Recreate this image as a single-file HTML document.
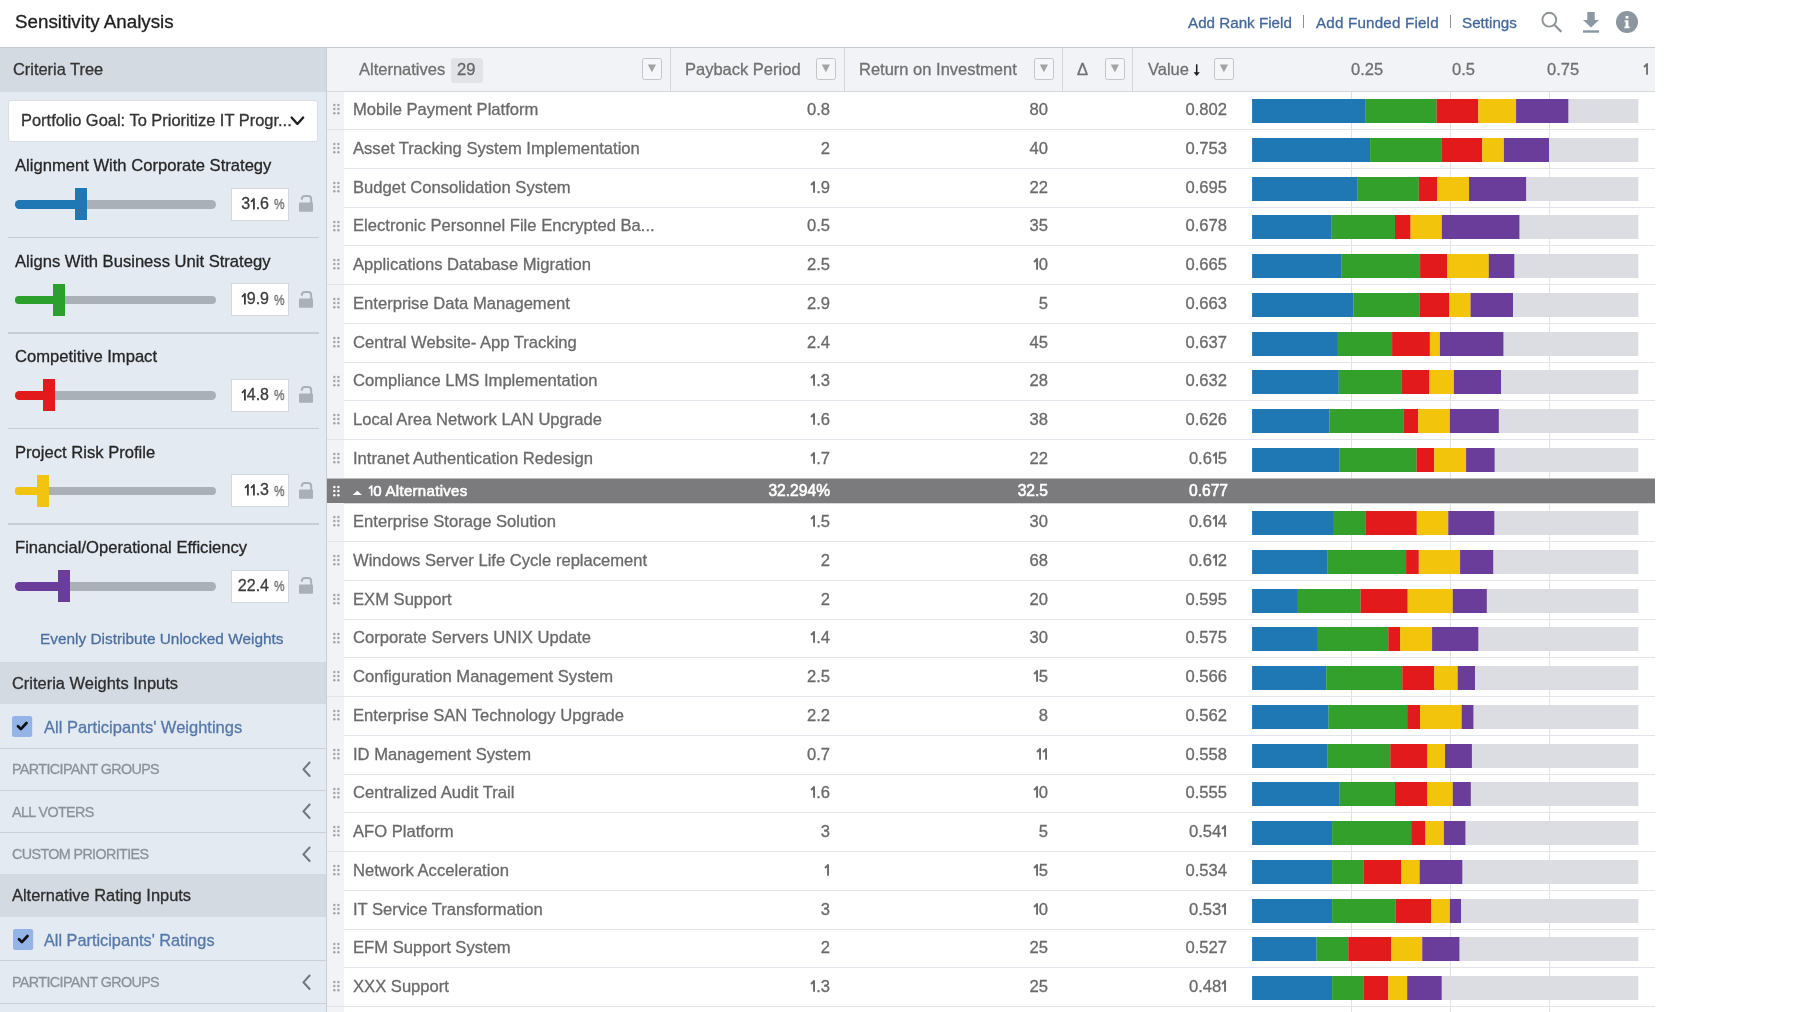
<!DOCTYPE html>
<html><head><meta charset="utf-8"><title>Sensitivity Analysis</title>
<style>
html,body{margin:0;padding:0;width:1800px;height:1012px;overflow:hidden;background:#fff}
body{position:relative;font-family:"Liberation Sans",sans-serif}
.t{position:absolute;white-space:nowrap;will-change:transform;-webkit-text-stroke:0.3px currentColor}
.r{position:absolute;display:block}
.one{display:inline-block;width:0.35em;height:0.711em;vertical-align:baseline;overflow:visible}
</style></head><body>
<div class="r" style="left:0.00px;top:0.00px;width:1800.00px;height:1012.00px;background:#ffffff;"></div>
<div class="t" style="left:15.00px;top:9.89px;font-size:18.8px;line-height:24px;color:#1e1e1e;">Sensitivity Analysis</div>
<div class="t" style="left:1187.90px;top:10.63px;font-size:15.2px;line-height:24px;color:#44679a;">Add Rank Field</div>
<div class="r" style="left:1303.00px;top:14.60px;width:1.40px;height:13.30px;background:#8f8f8f;"></div>
<div class="t" style="left:1316.10px;top:10.63px;font-size:15.2px;line-height:24px;color:#44679a;letter-spacing:0.18px;">Add Funded Field</div>
<div class="r" style="left:1450.00px;top:14.60px;width:1.40px;height:13.30px;background:#8f8f8f;"></div>
<div class="t" style="left:1462.40px;top:10.63px;font-size:15.2px;line-height:24px;color:#44679a;">Settings</div>
<svg class="r" style="left:1530px;top:0px" width="120" height="46" viewBox="0 0 120 46">
<circle cx="19.3" cy="19.7" r="6.9" fill="none" stroke="#8e9399" stroke-width="1.9"/>
<line x1="24.3" y1="24.8" x2="30.8" y2="31.3" stroke="#8e9399" stroke-width="2.2" stroke-linecap="round"/>
<path d="M57.3 12 H64.7 V20 H69 L61 27.6 L53 20 H57.3 Z" fill="#8b97a3"/>
<rect x="53" y="30.3" width="16" height="2.4" fill="#8b97a3"/>
<circle cx="97" cy="22" r="11" fill="#8b96a0"/>
<rect x="95.6" y="16" width="2.8" height="2.6" fill="#fff"/>
<path d="M94.6 20.2 H98.4 V26.6 H99.6 V28.2 H94.4 V26.6 H95.6 V21.8 H94.6 Z" fill="#fff"/>
</svg>
<div class="r" style="left:0.00px;top:47.00px;width:1655.00px;height:1.00px;background:#c6cbd2;"></div>
<div class="r" style="left:0.00px;top:48.00px;width:326.00px;height:964.00px;background:#e4eaf2;"></div>
<div class="r" style="left:325.60px;top:48.00px;width:1.40px;height:964.00px;background:#c9ced5;"></div>
<div class="r" style="left:0.00px;top:48.00px;width:325.60px;height:44.00px;background:#d3dae2;"></div>
<div class="t" style="left:12.50px;top:57.32px;font-size:16.4px;line-height:24px;color:#333;">Criteria Tree</div>
<div class="r" style="left:8px;top:99.5px;width:309.5px;height:42.5px;background:#fff;border:1px solid #d9dee5;box-sizing:border-box;border-radius:3px"></div>
<div class="t" style="left:21.25px;top:108.05px;font-size:16.45px;line-height:24px;color:#333;">Portfolio Goal: To Prioritize IT Progr...</div>
<svg class="r" style="left:288px;top:113px" width="20" height="16" viewBox="0 0 20 16"><path d="M3.6 4.5 L9.4 11.0 L15.2 4.5" fill="none" stroke="#1e1e1e" stroke-width="2.3" stroke-linecap="round" stroke-linejoin="round"/></svg>
<div class="t" style="left:15.00px;top:154.25px;font-size:16.6px;line-height:24px;color:#262626;">Alignment With Corporate Strategy</div>
<div class="r" style="left:14.5px;top:200.00px;width:201px;height:8.8px;background:#a9b0b8;border-radius:4.4px"></div>
<div class="r" style="left:14.5px;top:200.00px;width:64.52px;height:8.8px;background:#1f77b4;border-radius:4.4px 0 0 4.4px"></div>
<div class="r" style="left:75.02px;top:188.25px;width:12.00px;height:31.75px;background:#1f77b4;"></div>
<div class="r" style="left:230.5px;top:187.50px;width:58px;height:33px;background:#fff;border:1px solid #d3d8de;box-sizing:border-box"></div>
<div class="t" style="left:229.30px;width:40px;text-align:right;top:191.96px;font-size:16.0px;line-height:24px;color:#3c3c3c;">3<svg class="one" viewBox="0 0 5.8 11.8"><path d="M4.05 0.3V11.8M4.5 0.7L1.0 4.0" stroke="currentColor" stroke-width="1.9" fill="none"/></svg>.6</div>
<div class="t" style="left:273.60px;top:192.28px;font-size:14.2px;line-height:24px;color:#6a6a6a;transform:scaleX(0.84);transform-origin:0 50%;">%</div>
<svg class="r" style="left:296px;top:190.00px" width="22" height="26" viewBox="0 0 22 26">
<rect x="3" y="12.5" width="14" height="9.3" rx="1" fill="#a9b0b8"/>
<path d="M5.8 9.8 V9.2 Q5.8 5.9 9 5.9 H12 Q15.2 5.9 15.2 9.2 V13" fill="none" stroke="#a9b0b8" stroke-width="2"/>
</svg>
<div class="r" style="left:8.00px;top:236.50px;width:310.75px;height:1.50px;background:#c8cdd4;"></div>
<div class="t" style="left:15.00px;top:249.75px;font-size:16.6px;line-height:24px;color:#262626;">Aligns With Business Unit Strategy</div>
<div class="r" style="left:14.5px;top:295.50px;width:201px;height:8.8px;background:#a9b0b8;border-radius:4.4px"></div>
<div class="r" style="left:14.5px;top:295.50px;width:42.41px;height:8.8px;background:#2ca02c;border-radius:4.4px 0 0 4.4px"></div>
<div class="r" style="left:52.91px;top:283.75px;width:12.00px;height:31.75px;background:#2ca02c;"></div>
<div class="r" style="left:230.5px;top:283.00px;width:58px;height:33px;background:#fff;border:1px solid #d3d8de;box-sizing:border-box"></div>
<div class="t" style="left:229.30px;width:40px;text-align:right;top:287.46px;font-size:16.0px;line-height:24px;color:#3c3c3c;"><svg class="one" viewBox="0 0 5.8 11.8"><path d="M4.05 0.3V11.8M4.5 0.7L1.0 4.0" stroke="currentColor" stroke-width="1.9" fill="none"/></svg>9.9</div>
<div class="t" style="left:273.60px;top:287.78px;font-size:14.2px;line-height:24px;color:#6a6a6a;transform:scaleX(0.84);transform-origin:0 50%;">%</div>
<svg class="r" style="left:296px;top:285.50px" width="22" height="26" viewBox="0 0 22 26">
<rect x="3" y="12.5" width="14" height="9.3" rx="1" fill="#a9b0b8"/>
<path d="M5.8 9.8 V9.2 Q5.8 5.9 9 5.9 H12 Q15.2 5.9 15.2 9.2 V13" fill="none" stroke="#a9b0b8" stroke-width="2"/>
</svg>
<div class="r" style="left:8.00px;top:332.00px;width:310.75px;height:1.50px;background:#c8cdd4;"></div>
<div class="t" style="left:15.00px;top:345.25px;font-size:16.6px;line-height:24px;color:#262626;">Competitive Impact</div>
<div class="r" style="left:14.5px;top:391.00px;width:201px;height:8.8px;background:#a9b0b8;border-radius:4.4px"></div>
<div class="r" style="left:14.5px;top:391.00px;width:32.77px;height:8.8px;background:#e31a1c;border-radius:4.4px 0 0 4.4px"></div>
<div class="r" style="left:43.27px;top:379.25px;width:12.00px;height:31.75px;background:#e31a1c;"></div>
<div class="r" style="left:230.5px;top:378.50px;width:58px;height:33px;background:#fff;border:1px solid #d3d8de;box-sizing:border-box"></div>
<div class="t" style="left:229.30px;width:40px;text-align:right;top:382.96px;font-size:16.0px;line-height:24px;color:#3c3c3c;"><svg class="one" viewBox="0 0 5.8 11.8"><path d="M4.05 0.3V11.8M4.5 0.7L1.0 4.0" stroke="currentColor" stroke-width="1.9" fill="none"/></svg>4.8</div>
<div class="t" style="left:273.60px;top:383.28px;font-size:14.2px;line-height:24px;color:#6a6a6a;transform:scaleX(0.84);transform-origin:0 50%;">%</div>
<svg class="r" style="left:296px;top:381.00px" width="22" height="26" viewBox="0 0 22 26">
<rect x="3" y="12.5" width="14" height="9.3" rx="1" fill="#a9b0b8"/>
<path d="M5.8 9.8 V9.2 Q5.8 5.9 9 5.9 H12 Q15.2 5.9 15.2 9.2 V13" fill="none" stroke="#a9b0b8" stroke-width="2"/>
</svg>
<div class="r" style="left:8.00px;top:427.50px;width:310.75px;height:1.50px;background:#c8cdd4;"></div>
<div class="t" style="left:15.00px;top:440.75px;font-size:16.6px;line-height:24px;color:#262626;">Project Risk Profile</div>
<div class="r" style="left:14.5px;top:486.50px;width:201px;height:8.8px;background:#a9b0b8;border-radius:4.4px"></div>
<div class="r" style="left:14.5px;top:486.50px;width:26.16px;height:8.8px;background:#f2c40f;border-radius:4.4px 0 0 4.4px"></div>
<div class="r" style="left:36.66px;top:474.75px;width:12.00px;height:31.75px;background:#f2c40f;"></div>
<div class="r" style="left:230.5px;top:474.00px;width:58px;height:33px;background:#fff;border:1px solid #d3d8de;box-sizing:border-box"></div>
<div class="t" style="left:229.30px;width:40px;text-align:right;top:478.46px;font-size:16.0px;line-height:24px;color:#3c3c3c;"><svg class="one" viewBox="0 0 5.8 11.8"><path d="M4.05 0.3V11.8M4.5 0.7L1.0 4.0" stroke="currentColor" stroke-width="1.9" fill="none"/></svg><svg class="one" viewBox="0 0 5.8 11.8"><path d="M4.05 0.3V11.8M4.5 0.7L1.0 4.0" stroke="currentColor" stroke-width="1.9" fill="none"/></svg>.3</div>
<div class="t" style="left:273.60px;top:478.78px;font-size:14.2px;line-height:24px;color:#6a6a6a;transform:scaleX(0.84);transform-origin:0 50%;">%</div>
<svg class="r" style="left:296px;top:476.50px" width="22" height="26" viewBox="0 0 22 26">
<rect x="3" y="12.5" width="14" height="9.3" rx="1" fill="#a9b0b8"/>
<path d="M5.8 9.8 V9.2 Q5.8 5.9 9 5.9 H12 Q15.2 5.9 15.2 9.2 V13" fill="none" stroke="#a9b0b8" stroke-width="2"/>
</svg>
<div class="r" style="left:8.00px;top:523.00px;width:310.75px;height:1.50px;background:#c8cdd4;"></div>
<div class="t" style="left:15.00px;top:536.25px;font-size:16.6px;line-height:24px;color:#262626;">Financial/Operational Efficiency</div>
<div class="r" style="left:14.5px;top:582.00px;width:201px;height:8.8px;background:#a9b0b8;border-radius:4.4px"></div>
<div class="r" style="left:14.5px;top:582.00px;width:47.14px;height:8.8px;background:#6a3d9a;border-radius:4.4px 0 0 4.4px"></div>
<div class="r" style="left:57.64px;top:570.25px;width:12.00px;height:31.75px;background:#6a3d9a;"></div>
<div class="r" style="left:230.5px;top:569.50px;width:58px;height:33px;background:#fff;border:1px solid #d3d8de;box-sizing:border-box"></div>
<div class="t" style="left:229.30px;width:40px;text-align:right;top:573.96px;font-size:16.0px;line-height:24px;color:#3c3c3c;">22.4</div>
<div class="t" style="left:273.60px;top:574.28px;font-size:14.2px;line-height:24px;color:#6a6a6a;transform:scaleX(0.84);transform-origin:0 50%;">%</div>
<svg class="r" style="left:296px;top:572.00px" width="22" height="26" viewBox="0 0 22 26">
<rect x="3" y="12.5" width="14" height="9.3" rx="1" fill="#a9b0b8"/>
<path d="M5.8 9.8 V9.2 Q5.8 5.9 9 5.9 H12 Q15.2 5.9 15.2 9.2 V13" fill="none" stroke="#a9b0b8" stroke-width="2"/>
</svg>
<div class="t" style="left:39.80px;top:627.46px;font-size:15.4px;line-height:24px;color:#4d6f9f;">Evenly Distribute Unlocked Weights</div>
<div class="r" style="left:0.00px;top:661.60px;width:325.60px;height:42.80px;background:#d3dae2;"></div>
<div class="t" style="left:12.40px;top:670.60px;font-size:16.45px;line-height:24px;color:#2e2e2e;">Criteria Weights Inputs</div>
<svg class="r" style="left:12.10px;top:715.90px" width="21" height="21" viewBox="0 0 21 21">
<rect x="0" y="0" width="20.2" height="20.9" rx="2.2" fill="#94b3e6"/>
<path d="M6.0 10.2 L8.9 13.1 L14.5 7.0" fill="none" stroke="#111" stroke-width="2.7" stroke-linecap="round" stroke-linejoin="round"/>
</svg>
<div class="t" style="left:43.90px;top:714.58px;font-size:16.5px;line-height:24px;color:#5678a8;">All Participants' Weightings</div>
<div class="r" style="left:0.00px;top:747.50px;width:325.60px;height:1.00px;background:#cbd0d7;"></div>
<div class="t" style="left:12.30px;top:757.25px;font-size:14.3px;line-height:24px;color:#8b9299;letter-spacing:-0.6px;">PARTICIPANT GROUPS</div>
<svg class="r" style="left:298px;top:758.60px" width="16" height="20" viewBox="0 0 16 20">
<path d="M11.6 3.5 L5.4 10.3 L11.6 17" fill="none" stroke="#6f7780" stroke-width="2" stroke-linecap="round" stroke-linejoin="round"/>
</svg>
<div class="r" style="left:0.00px;top:789.50px;width:325.60px;height:1.00px;background:#cbd0d7;"></div>
<div class="t" style="left:12.30px;top:799.65px;font-size:14.3px;line-height:24px;color:#8b9299;letter-spacing:-0.6px;">ALL VOTERS</div>
<svg class="r" style="left:298px;top:801.00px" width="16" height="20" viewBox="0 0 16 20">
<path d="M11.6 3.5 L5.4 10.3 L11.6 17" fill="none" stroke="#6f7780" stroke-width="2" stroke-linecap="round" stroke-linejoin="round"/>
</svg>
<div class="r" style="left:0.00px;top:832.10px;width:325.60px;height:1.00px;background:#cbd0d7;"></div>
<div class="t" style="left:12.30px;top:842.25px;font-size:14.3px;line-height:24px;color:#8b9299;letter-spacing:-0.6px;">CUSTOM PRIORITIES</div>
<svg class="r" style="left:298px;top:843.60px" width="16" height="20" viewBox="0 0 16 20">
<path d="M11.6 3.5 L5.4 10.3 L11.6 17" fill="none" stroke="#6f7780" stroke-width="2" stroke-linecap="round" stroke-linejoin="round"/>
</svg>
<div class="r" style="left:0.00px;top:874.40px;width:325.60px;height:42.30px;background:#d3dae2;"></div>
<div class="t" style="left:12.40px;top:883.10px;font-size:16.45px;line-height:24px;color:#2e2e2e;">Alternative Rating Inputs</div>
<svg class="r" style="left:12.50px;top:928.70px" width="21" height="21" viewBox="0 0 21 21">
<rect x="0" y="0" width="20.2" height="20.9" rx="2.2" fill="#94b3e6"/>
<path d="M6.0 10.2 L8.9 13.1 L14.5 7.0" fill="none" stroke="#111" stroke-width="2.7" stroke-linecap="round" stroke-linejoin="round"/>
</svg>
<div class="t" style="left:43.90px;top:928.35px;font-size:16.3px;line-height:24px;color:#5678a8;">All Participants' Ratings</div>
<div class="r" style="left:0.00px;top:960.00px;width:325.60px;height:1.00px;background:#cbd0d7;"></div>
<div class="t" style="left:12.30px;top:970.45px;font-size:14.3px;line-height:24px;color:#8b9299;letter-spacing:-0.6px;">PARTICIPANT GROUPS</div>
<svg class="r" style="left:298px;top:971.80px" width="16" height="20" viewBox="0 0 16 20">
<path d="M11.6 3.5 L5.4 10.3 L11.6 17" fill="none" stroke="#6f7780" stroke-width="2" stroke-linecap="round" stroke-linejoin="round"/>
</svg>
<div class="r" style="left:0.00px;top:1002.60px;width:325.60px;height:1.00px;background:#cbd0d7;"></div>
<div class="r" style="left:327.00px;top:48.20px;width:1328.00px;height:43.10px;background:#f2f3f6;"></div>
<div class="r" style="left:669.60px;top:48.00px;width:1.20px;height:43.00px;background:#d3d5d9;"></div>
<div class="r" style="left:843.60px;top:48.00px;width:1.20px;height:43.00px;background:#d3d5d9;"></div>
<div class="r" style="left:1061.80px;top:48.00px;width:1.20px;height:43.00px;background:#d3d5d9;"></div>
<div class="r" style="left:1132.20px;top:48.00px;width:1.20px;height:43.00px;background:#d3d5d9;"></div>
<div class="t" style="left:359.10px;top:57.28px;font-size:16.5px;line-height:24px;color:#707070;">Alternatives</div>
<div class="r" style="left:451px;top:57.7px;width:31.5px;height:25px;background:#e1e3e7;border-radius:3px"></div>
<div class="t" style="left:456.50px;top:57.28px;font-size:16.5px;line-height:24px;color:#666;">29</div>
<div class="t" style="left:684.50px;top:57.28px;font-size:16.5px;line-height:24px;color:#707070;">Payback Period</div>
<div class="t" style="left:858.90px;top:57.28px;font-size:16.5px;line-height:24px;color:#707070;">Return on Investment</div>
<div class="t" style="left:1077.20px;top:57.28px;font-size:16.5px;line-height:24px;color:#707070;">Δ</div>
<div class="t" style="left:1148.00px;top:57.28px;font-size:16.5px;line-height:24px;color:#707070;">Value</div>
<svg class="r" style="left:1190px;top:60px" width="12" height="20" viewBox="0 0 12 20"><path d="M6.7 4.3 V13" stroke="#1a1a1a" stroke-width="1.5"/><path d="M3.6 12.2 H9.8 L6.7 16 Z" fill="#1a1a1a"/></svg>
<div class="r" style="left:642px;top:58.3px;width:20px;height:21.3px;border:1px solid #c2c5ca;box-sizing:border-box;border-radius:2.5px;background:#f5f6f8"></div>
<svg class="r" style="left:642px;top:58.3px" width="20" height="21" viewBox="0 0 20 21"><path d="M5.8 6.6 H14.0 L9.9 14.2 Z" fill="#a3a3a3"/></svg>
<div class="r" style="left:816px;top:58.3px;width:20px;height:21.3px;border:1px solid #c2c5ca;box-sizing:border-box;border-radius:2.5px;background:#f5f6f8"></div>
<svg class="r" style="left:816px;top:58.3px" width="20" height="21" viewBox="0 0 20 21"><path d="M5.8 6.6 H14.0 L9.9 14.2 Z" fill="#a3a3a3"/></svg>
<div class="r" style="left:1034.2px;top:58.3px;width:20px;height:21.3px;border:1px solid #c2c5ca;box-sizing:border-box;border-radius:2.5px;background:#f5f6f8"></div>
<svg class="r" style="left:1034.2px;top:58.3px" width="20" height="21" viewBox="0 0 20 21"><path d="M5.8 6.6 H14.0 L9.9 14.2 Z" fill="#a3a3a3"/></svg>
<div class="r" style="left:1104.5px;top:58.3px;width:20px;height:21.3px;border:1px solid #c2c5ca;box-sizing:border-box;border-radius:2.5px;background:#f5f6f8"></div>
<svg class="r" style="left:1104.5px;top:58.3px" width="20" height="21" viewBox="0 0 20 21"><path d="M5.8 6.6 H14.0 L9.9 14.2 Z" fill="#a3a3a3"/></svg>
<div class="r" style="left:1214.4px;top:58.3px;width:20px;height:21.3px;border:1px solid #c2c5ca;box-sizing:border-box;border-radius:2.5px;background:#f5f6f8"></div>
<svg class="r" style="left:1214.4px;top:58.3px" width="20" height="21" viewBox="0 0 20 21"><path d="M5.8 6.6 H14.0 L9.9 14.2 Z" fill="#a3a3a3"/></svg>
<div class="t" style="left:1350.50px;top:57.48px;font-size:16.5px;line-height:24px;color:#707070;">0.25</div>
<div class="t" style="left:1452.00px;top:57.48px;font-size:16.5px;line-height:24px;color:#707070;">0.5</div>
<div class="t" style="left:1547.00px;top:57.48px;font-size:16.5px;line-height:24px;color:#707070;">0.75</div>
<div class="t" style="left:1643.30px;top:57.48px;font-size:16.5px;line-height:24px;color:#707070;"><svg class="one" viewBox="0 0 5.8 11.8"><path d="M4.05 0.3V11.8M4.5 0.7L1.0 4.0" stroke="currentColor" stroke-width="1.9" fill="none"/></svg></div>
<div class="r" style="left:327.00px;top:91.80px;width:1328.00px;height:920.20px;background:#ffffff;"></div>
<div class="r" style="left:1350.75px;top:91.80px;width:1.50px;height:920.20px;background:#dfe1e6;"></div>
<div class="r" style="left:1449.75px;top:91.80px;width:1.50px;height:920.20px;background:#dfe1e6;"></div>
<div class="r" style="left:1548.75px;top:91.80px;width:1.50px;height:920.20px;background:#dfe1e6;"></div>
<div class="r" style="left:327.00px;top:92.00px;width:17.00px;height:37.00px;background:#f2f3f6;"></div>
<div class="r" style="left:327.00px;top:129.00px;width:1328.00px;height:1.00px;background:#e2e4e9;"></div>
<svg class="r" style="left:331.6px;top:103.40px" width="10" height="14" viewBox="0 0 10 14"><circle cx="2.3" cy="2.0" r="1.25" fill="#a2a5aa"/><circle cx="2.3" cy="6.1" r="1.25" fill="#a2a5aa"/><circle cx="2.3" cy="10.2" r="1.25" fill="#a2a5aa"/><circle cx="6.4" cy="2.0" r="1.25" fill="#a2a5aa"/><circle cx="6.4" cy="6.1" r="1.25" fill="#a2a5aa"/><circle cx="6.4" cy="10.2" r="1.25" fill="#a2a5aa"/></svg>
<div class="t" style="left:352.70px;top:98.15px;font-size:16.6px;line-height:24px;color:#6a6a6a;">Mobile Payment Platform</div>
<div class="t" style="left:729.60px;width:100px;text-align:right;top:98.15px;font-size:16.6px;line-height:24px;color:#6a6a6a;">0.8</div>
<div class="t" style="left:947.50px;width:100px;text-align:right;top:98.15px;font-size:16.6px;line-height:24px;color:#6a6a6a;">80</div>
<div class="t" style="left:1126.70px;width:100px;text-align:right;top:98.15px;font-size:16.6px;line-height:24px;color:#6a6a6a;">0.802</div>
<svg class="r" style="left:1252px;top:99.10px" width="390" height="24" viewBox="0 0 390 24"><rect x="0.10" y="0" width="386.20" height="24" fill="#dcdde2"/><rect x="0.10" y="0" width="113.60" height="24" fill="#1f78b4"/><rect x="113.70" y="0" width="70.90" height="24" fill="#33a02c"/><rect x="184.60" y="0" width="41.70" height="24" fill="#e31a1c"/><rect x="226.30" y="0" width="37.80" height="24" fill="#f2c50c"/><rect x="264.10" y="0" width="52.20" height="24" fill="#6b3d9a"/></svg>
<div class="r" style="left:327.00px;top:130.00px;width:17.00px;height:38.00px;background:#f2f3f6;"></div>
<div class="r" style="left:327.00px;top:168.00px;width:1328.00px;height:1.00px;background:#e2e4e9;"></div>
<svg class="r" style="left:331.6px;top:142.15px" width="10" height="14" viewBox="0 0 10 14"><circle cx="2.3" cy="2.0" r="1.25" fill="#a2a5aa"/><circle cx="2.3" cy="6.1" r="1.25" fill="#a2a5aa"/><circle cx="2.3" cy="10.2" r="1.25" fill="#a2a5aa"/><circle cx="6.4" cy="2.0" r="1.25" fill="#a2a5aa"/><circle cx="6.4" cy="6.1" r="1.25" fill="#a2a5aa"/><circle cx="6.4" cy="10.2" r="1.25" fill="#a2a5aa"/></svg>
<div class="t" style="left:352.70px;top:136.90px;font-size:16.6px;line-height:24px;color:#6a6a6a;">Asset Tracking System Implementation</div>
<div class="t" style="left:729.60px;width:100px;text-align:right;top:136.90px;font-size:16.6px;line-height:24px;color:#6a6a6a;">2</div>
<div class="t" style="left:947.50px;width:100px;text-align:right;top:136.90px;font-size:16.6px;line-height:24px;color:#6a6a6a;">40</div>
<div class="t" style="left:1126.70px;width:100px;text-align:right;top:136.90px;font-size:16.6px;line-height:24px;color:#6a6a6a;">0.753</div>
<svg class="r" style="left:1252px;top:137.85px" width="390" height="24" viewBox="0 0 390 24"><rect x="0.10" y="0" width="386.20" height="24" fill="#dcdde2"/><rect x="0.10" y="0" width="118.00" height="24" fill="#1f78b4"/><rect x="118.10" y="0" width="71.80" height="24" fill="#33a02c"/><rect x="189.90" y="0" width="40.40" height="24" fill="#e31a1c"/><rect x="230.30" y="0" width="21.60" height="24" fill="#f2c50c"/><rect x="251.90" y="0" width="45.10" height="24" fill="#6b3d9a"/></svg>
<div class="r" style="left:327.00px;top:168.00px;width:17.00px;height:39.00px;background:#f2f3f6;"></div>
<div class="r" style="left:327.00px;top:207.00px;width:1328.00px;height:1.00px;background:#e2e4e9;"></div>
<svg class="r" style="left:331.6px;top:180.90px" width="10" height="14" viewBox="0 0 10 14"><circle cx="2.3" cy="2.0" r="1.25" fill="#a2a5aa"/><circle cx="2.3" cy="6.1" r="1.25" fill="#a2a5aa"/><circle cx="2.3" cy="10.2" r="1.25" fill="#a2a5aa"/><circle cx="6.4" cy="2.0" r="1.25" fill="#a2a5aa"/><circle cx="6.4" cy="6.1" r="1.25" fill="#a2a5aa"/><circle cx="6.4" cy="10.2" r="1.25" fill="#a2a5aa"/></svg>
<div class="t" style="left:352.70px;top:175.65px;font-size:16.6px;line-height:24px;color:#6a6a6a;">Budget Consolidation System</div>
<div class="t" style="left:729.60px;width:100px;text-align:right;top:175.65px;font-size:16.6px;line-height:24px;color:#6a6a6a;"><svg class="one" viewBox="0 0 5.8 11.8"><path d="M4.05 0.3V11.8M4.5 0.7L1.0 4.0" stroke="currentColor" stroke-width="1.9" fill="none"/></svg>.9</div>
<div class="t" style="left:947.50px;width:100px;text-align:right;top:175.65px;font-size:16.6px;line-height:24px;color:#6a6a6a;">22</div>
<div class="t" style="left:1126.70px;width:100px;text-align:right;top:175.65px;font-size:16.6px;line-height:24px;color:#6a6a6a;">0.695</div>
<svg class="r" style="left:1252px;top:176.60px" width="390" height="24" viewBox="0 0 390 24"><rect x="0.10" y="0" width="386.20" height="24" fill="#dcdde2"/><rect x="0.10" y="0" width="105.60" height="24" fill="#1f78b4"/><rect x="105.70" y="0" width="61.10" height="24" fill="#33a02c"/><rect x="166.80" y="0" width="18.40" height="24" fill="#e31a1c"/><rect x="185.20" y="0" width="31.80" height="24" fill="#f2c50c"/><rect x="217.00" y="0" width="57.10" height="24" fill="#6b3d9a"/></svg>
<div class="r" style="left:327.00px;top:207.00px;width:17.00px;height:38.00px;background:#f2f3f6;"></div>
<div class="r" style="left:327.00px;top:245.00px;width:1328.00px;height:1.00px;background:#e2e4e9;"></div>
<svg class="r" style="left:331.6px;top:219.65px" width="10" height="14" viewBox="0 0 10 14"><circle cx="2.3" cy="2.0" r="1.25" fill="#a2a5aa"/><circle cx="2.3" cy="6.1" r="1.25" fill="#a2a5aa"/><circle cx="2.3" cy="10.2" r="1.25" fill="#a2a5aa"/><circle cx="6.4" cy="2.0" r="1.25" fill="#a2a5aa"/><circle cx="6.4" cy="6.1" r="1.25" fill="#a2a5aa"/><circle cx="6.4" cy="10.2" r="1.25" fill="#a2a5aa"/></svg>
<div class="t" style="left:352.70px;top:214.40px;font-size:16.6px;line-height:24px;color:#6a6a6a;">Electronic Personnel File Encrypted Ba...</div>
<div class="t" style="left:729.60px;width:100px;text-align:right;top:214.40px;font-size:16.6px;line-height:24px;color:#6a6a6a;">0.5</div>
<div class="t" style="left:947.50px;width:100px;text-align:right;top:214.40px;font-size:16.6px;line-height:24px;color:#6a6a6a;">35</div>
<div class="t" style="left:1126.70px;width:100px;text-align:right;top:214.40px;font-size:16.6px;line-height:24px;color:#6a6a6a;">0.678</div>
<svg class="r" style="left:1252px;top:215.35px" width="390" height="24" viewBox="0 0 390 24"><rect x="0.10" y="0" width="386.20" height="24" fill="#dcdde2"/><rect x="0.10" y="0" width="79.60" height="24" fill="#1f78b4"/><rect x="79.70" y="0" width="63.30" height="24" fill="#33a02c"/><rect x="143.00" y="0" width="15.60" height="24" fill="#e31a1c"/><rect x="158.60" y="0" width="31.30" height="24" fill="#f2c50c"/><rect x="189.90" y="0" width="77.50" height="24" fill="#6b3d9a"/></svg>
<div class="r" style="left:327.00px;top:245.00px;width:17.00px;height:39.00px;background:#f2f3f6;"></div>
<div class="r" style="left:327.00px;top:284.00px;width:1328.00px;height:1.00px;background:#e2e4e9;"></div>
<svg class="r" style="left:331.6px;top:258.40px" width="10" height="14" viewBox="0 0 10 14"><circle cx="2.3" cy="2.0" r="1.25" fill="#a2a5aa"/><circle cx="2.3" cy="6.1" r="1.25" fill="#a2a5aa"/><circle cx="2.3" cy="10.2" r="1.25" fill="#a2a5aa"/><circle cx="6.4" cy="2.0" r="1.25" fill="#a2a5aa"/><circle cx="6.4" cy="6.1" r="1.25" fill="#a2a5aa"/><circle cx="6.4" cy="10.2" r="1.25" fill="#a2a5aa"/></svg>
<div class="t" style="left:352.70px;top:253.15px;font-size:16.6px;line-height:24px;color:#6a6a6a;">Applications Database Migration</div>
<div class="t" style="left:729.60px;width:100px;text-align:right;top:253.15px;font-size:16.6px;line-height:24px;color:#6a6a6a;">2.5</div>
<div class="t" style="left:947.50px;width:100px;text-align:right;top:253.15px;font-size:16.6px;line-height:24px;color:#6a6a6a;"><svg class="one" viewBox="0 0 5.8 11.8"><path d="M4.05 0.3V11.8M4.5 0.7L1.0 4.0" stroke="currentColor" stroke-width="1.9" fill="none"/></svg>0</div>
<div class="t" style="left:1126.70px;width:100px;text-align:right;top:253.15px;font-size:16.6px;line-height:24px;color:#6a6a6a;">0.665</div>
<svg class="r" style="left:1252px;top:254.10px" width="390" height="24" viewBox="0 0 390 24"><rect x="0.10" y="0" width="386.20" height="24" fill="#dcdde2"/><rect x="0.10" y="0" width="89.60" height="24" fill="#1f78b4"/><rect x="89.70" y="0" width="78.40" height="24" fill="#33a02c"/><rect x="168.10" y="0" width="27.10" height="24" fill="#e31a1c"/><rect x="195.20" y="0" width="41.60" height="24" fill="#f2c50c"/><rect x="236.80" y="0" width="25.50" height="24" fill="#6b3d9a"/></svg>
<div class="r" style="left:327.00px;top:285.00px;width:17.00px;height:38.00px;background:#f2f3f6;"></div>
<div class="r" style="left:327.00px;top:323.00px;width:1328.00px;height:1.00px;background:#e2e4e9;"></div>
<svg class="r" style="left:331.6px;top:297.15px" width="10" height="14" viewBox="0 0 10 14"><circle cx="2.3" cy="2.0" r="1.25" fill="#a2a5aa"/><circle cx="2.3" cy="6.1" r="1.25" fill="#a2a5aa"/><circle cx="2.3" cy="10.2" r="1.25" fill="#a2a5aa"/><circle cx="6.4" cy="2.0" r="1.25" fill="#a2a5aa"/><circle cx="6.4" cy="6.1" r="1.25" fill="#a2a5aa"/><circle cx="6.4" cy="10.2" r="1.25" fill="#a2a5aa"/></svg>
<div class="t" style="left:352.70px;top:291.90px;font-size:16.6px;line-height:24px;color:#6a6a6a;">Enterprise Data Management</div>
<div class="t" style="left:729.60px;width:100px;text-align:right;top:291.90px;font-size:16.6px;line-height:24px;color:#6a6a6a;">2.9</div>
<div class="t" style="left:947.50px;width:100px;text-align:right;top:291.90px;font-size:16.6px;line-height:24px;color:#6a6a6a;">5</div>
<div class="t" style="left:1126.70px;width:100px;text-align:right;top:291.90px;font-size:16.6px;line-height:24px;color:#6a6a6a;">0.663</div>
<svg class="r" style="left:1252px;top:292.85px" width="390" height="24" viewBox="0 0 390 24"><rect x="0.10" y="0" width="386.20" height="24" fill="#dcdde2"/><rect x="0.10" y="0" width="101.30" height="24" fill="#1f78b4"/><rect x="101.40" y="0" width="66.00" height="24" fill="#33a02c"/><rect x="167.40" y="0" width="29.60" height="24" fill="#e31a1c"/><rect x="197.00" y="0" width="21.60" height="24" fill="#f2c50c"/><rect x="218.60" y="0" width="42.40" height="24" fill="#6b3d9a"/></svg>
<div class="r" style="left:327.00px;top:323.00px;width:17.00px;height:39.00px;background:#f2f3f6;"></div>
<div class="r" style="left:327.00px;top:362.00px;width:1328.00px;height:1.00px;background:#e2e4e9;"></div>
<svg class="r" style="left:331.6px;top:335.90px" width="10" height="14" viewBox="0 0 10 14"><circle cx="2.3" cy="2.0" r="1.25" fill="#a2a5aa"/><circle cx="2.3" cy="6.1" r="1.25" fill="#a2a5aa"/><circle cx="2.3" cy="10.2" r="1.25" fill="#a2a5aa"/><circle cx="6.4" cy="2.0" r="1.25" fill="#a2a5aa"/><circle cx="6.4" cy="6.1" r="1.25" fill="#a2a5aa"/><circle cx="6.4" cy="10.2" r="1.25" fill="#a2a5aa"/></svg>
<div class="t" style="left:352.70px;top:330.65px;font-size:16.6px;line-height:24px;color:#6a6a6a;">Central Website- App Tracking</div>
<div class="t" style="left:729.60px;width:100px;text-align:right;top:330.65px;font-size:16.6px;line-height:24px;color:#6a6a6a;">2.4</div>
<div class="t" style="left:947.50px;width:100px;text-align:right;top:330.65px;font-size:16.6px;line-height:24px;color:#6a6a6a;">45</div>
<div class="t" style="left:1126.70px;width:100px;text-align:right;top:330.65px;font-size:16.6px;line-height:24px;color:#6a6a6a;">0.637</div>
<svg class="r" style="left:1252px;top:331.60px" width="390" height="24" viewBox="0 0 390 24"><rect x="0.10" y="0" width="386.20" height="24" fill="#dcdde2"/><rect x="0.10" y="0" width="85.80" height="24" fill="#1f78b4"/><rect x="85.90" y="0" width="54.20" height="24" fill="#33a02c"/><rect x="140.10" y="0" width="37.80" height="24" fill="#e31a1c"/><rect x="177.90" y="0" width="10.00" height="24" fill="#f2c50c"/><rect x="187.90" y="0" width="63.50" height="24" fill="#6b3d9a"/></svg>
<div class="r" style="left:327.00px;top:362.00px;width:17.00px;height:38.00px;background:#f2f3f6;"></div>
<div class="r" style="left:327.00px;top:400.00px;width:1328.00px;height:1.00px;background:#e2e4e9;"></div>
<svg class="r" style="left:331.6px;top:374.65px" width="10" height="14" viewBox="0 0 10 14"><circle cx="2.3" cy="2.0" r="1.25" fill="#a2a5aa"/><circle cx="2.3" cy="6.1" r="1.25" fill="#a2a5aa"/><circle cx="2.3" cy="10.2" r="1.25" fill="#a2a5aa"/><circle cx="6.4" cy="2.0" r="1.25" fill="#a2a5aa"/><circle cx="6.4" cy="6.1" r="1.25" fill="#a2a5aa"/><circle cx="6.4" cy="10.2" r="1.25" fill="#a2a5aa"/></svg>
<div class="t" style="left:352.70px;top:369.40px;font-size:16.6px;line-height:24px;color:#6a6a6a;">Compliance LMS Implementation</div>
<div class="t" style="left:729.60px;width:100px;text-align:right;top:369.40px;font-size:16.6px;line-height:24px;color:#6a6a6a;"><svg class="one" viewBox="0 0 5.8 11.8"><path d="M4.05 0.3V11.8M4.5 0.7L1.0 4.0" stroke="currentColor" stroke-width="1.9" fill="none"/></svg>.3</div>
<div class="t" style="left:947.50px;width:100px;text-align:right;top:369.40px;font-size:16.6px;line-height:24px;color:#6a6a6a;">28</div>
<div class="t" style="left:1126.70px;width:100px;text-align:right;top:369.40px;font-size:16.6px;line-height:24px;color:#6a6a6a;">0.632</div>
<svg class="r" style="left:1252px;top:370.35px" width="390" height="24" viewBox="0 0 390 24"><rect x="0.10" y="0" width="386.20" height="24" fill="#dcdde2"/><rect x="0.10" y="0" width="86.70" height="24" fill="#1f78b4"/><rect x="86.80" y="0" width="63.10" height="24" fill="#33a02c"/><rect x="149.90" y="0" width="27.50" height="24" fill="#e31a1c"/><rect x="177.40" y="0" width="24.50" height="24" fill="#f2c50c"/><rect x="201.90" y="0" width="47.10" height="24" fill="#6b3d9a"/></svg>
<div class="r" style="left:327.00px;top:400.00px;width:17.00px;height:39.00px;background:#f2f3f6;"></div>
<div class="r" style="left:327.00px;top:439.00px;width:1328.00px;height:1.00px;background:#e2e4e9;"></div>
<svg class="r" style="left:331.6px;top:413.40px" width="10" height="14" viewBox="0 0 10 14"><circle cx="2.3" cy="2.0" r="1.25" fill="#a2a5aa"/><circle cx="2.3" cy="6.1" r="1.25" fill="#a2a5aa"/><circle cx="2.3" cy="10.2" r="1.25" fill="#a2a5aa"/><circle cx="6.4" cy="2.0" r="1.25" fill="#a2a5aa"/><circle cx="6.4" cy="6.1" r="1.25" fill="#a2a5aa"/><circle cx="6.4" cy="10.2" r="1.25" fill="#a2a5aa"/></svg>
<div class="t" style="left:352.70px;top:408.15px;font-size:16.6px;line-height:24px;color:#6a6a6a;">Local Area Network LAN Upgrade</div>
<div class="t" style="left:729.60px;width:100px;text-align:right;top:408.15px;font-size:16.6px;line-height:24px;color:#6a6a6a;"><svg class="one" viewBox="0 0 5.8 11.8"><path d="M4.05 0.3V11.8M4.5 0.7L1.0 4.0" stroke="currentColor" stroke-width="1.9" fill="none"/></svg>.6</div>
<div class="t" style="left:947.50px;width:100px;text-align:right;top:408.15px;font-size:16.6px;line-height:24px;color:#6a6a6a;">38</div>
<div class="t" style="left:1126.70px;width:100px;text-align:right;top:408.15px;font-size:16.6px;line-height:24px;color:#6a6a6a;">0.626</div>
<svg class="r" style="left:1252px;top:409.10px" width="390" height="24" viewBox="0 0 390 24"><rect x="0.10" y="0" width="386.20" height="24" fill="#dcdde2"/><rect x="0.10" y="0" width="77.30" height="24" fill="#1f78b4"/><rect x="77.40" y="0" width="74.00" height="24" fill="#33a02c"/><rect x="151.40" y="0" width="14.90" height="24" fill="#e31a1c"/><rect x="166.30" y="0" width="31.60" height="24" fill="#f2c50c"/><rect x="197.90" y="0" width="48.90" height="24" fill="#6b3d9a"/></svg>
<div class="r" style="left:327.00px;top:440.00px;width:17.00px;height:38.00px;background:#f2f3f6;"></div>
<div class="r" style="left:327.00px;top:478.00px;width:1328.00px;height:1.00px;background:#e2e4e9;"></div>
<svg class="r" style="left:331.6px;top:452.15px" width="10" height="14" viewBox="0 0 10 14"><circle cx="2.3" cy="2.0" r="1.25" fill="#a2a5aa"/><circle cx="2.3" cy="6.1" r="1.25" fill="#a2a5aa"/><circle cx="2.3" cy="10.2" r="1.25" fill="#a2a5aa"/><circle cx="6.4" cy="2.0" r="1.25" fill="#a2a5aa"/><circle cx="6.4" cy="6.1" r="1.25" fill="#a2a5aa"/><circle cx="6.4" cy="10.2" r="1.25" fill="#a2a5aa"/></svg>
<div class="t" style="left:352.70px;top:446.90px;font-size:16.6px;line-height:24px;color:#6a6a6a;">Intranet Authentication Redesign</div>
<div class="t" style="left:729.60px;width:100px;text-align:right;top:446.90px;font-size:16.6px;line-height:24px;color:#6a6a6a;"><svg class="one" viewBox="0 0 5.8 11.8"><path d="M4.05 0.3V11.8M4.5 0.7L1.0 4.0" stroke="currentColor" stroke-width="1.9" fill="none"/></svg>.7</div>
<div class="t" style="left:947.50px;width:100px;text-align:right;top:446.90px;font-size:16.6px;line-height:24px;color:#6a6a6a;">22</div>
<div class="t" style="left:1126.70px;width:100px;text-align:right;top:446.90px;font-size:16.6px;line-height:24px;color:#6a6a6a;">0.6<svg class="one" viewBox="0 0 5.8 11.8"><path d="M4.05 0.3V11.8M4.5 0.7L1.0 4.0" stroke="currentColor" stroke-width="1.9" fill="none"/></svg>5</div>
<svg class="r" style="left:1252px;top:447.85px" width="390" height="24" viewBox="0 0 390 24"><rect x="0.10" y="0" width="386.20" height="24" fill="#dcdde2"/><rect x="0.10" y="0" width="87.10" height="24" fill="#1f78b4"/><rect x="87.20" y="0" width="77.40" height="24" fill="#33a02c"/><rect x="164.60" y="0" width="17.70" height="24" fill="#e31a1c"/><rect x="182.30" y="0" width="31.80" height="24" fill="#f2c50c"/><rect x="214.10" y="0" width="28.50" height="24" fill="#6b3d9a"/></svg>
<div class="r" style="left:327.00px;top:478.00px;width:1328.00px;height:1.00px;background:#bdbdbe;"></div>
<div class="r" style="left:327.00px;top:479.00px;width:1328.00px;height:24.00px;background:#7b7b7d;"></div>
<div class="r" style="left:327.00px;top:503.00px;width:1328.00px;height:1.00px;background:#d7d7d8;"></div>
<svg class="r" style="left:331.6px;top:485.00px" width="10" height="14" viewBox="0 0 10 14"><circle cx="2.3" cy="2.0" r="1.25" fill="#ffffff"/><circle cx="2.3" cy="6.1" r="1.25" fill="#ffffff"/><circle cx="2.3" cy="10.2" r="1.25" fill="#ffffff"/><circle cx="6.4" cy="2.0" r="1.25" fill="#ffffff"/><circle cx="6.4" cy="6.1" r="1.25" fill="#ffffff"/><circle cx="6.4" cy="10.2" r="1.25" fill="#ffffff"/></svg>
<svg class="r" style="left:351px;top:489.10px" width="13" height="8" viewBox="0 0 13 8"><path d="M1.6 6 L6.3 1.7 L11 6 Z" fill="#fff"/></svg>
<div class="t" style="left:368.00px;top:478.70px;font-size:15.0px;line-height:24px;color:#ffffff;letter-spacing:0.3px;-webkit-text-stroke:0.6px #fff;"><svg class="one" viewBox="0 0 5.8 11.8"><path d="M4.05 0.3V11.8M4.5 0.7L1.0 4.0" stroke="currentColor" stroke-width="1.9" fill="none"/></svg>0 Alternatives</div>
<div class="t" style="left:710.20px;width:120px;text-align:right;top:479.09px;font-size:15.6px;line-height:24px;color:#ffffff;-webkit-text-stroke:0.6px #fff;">32.294%</div>
<div class="t" style="left:927.50px;width:120px;text-align:right;top:479.09px;font-size:15.6px;line-height:24px;color:#ffffff;-webkit-text-stroke:0.6px #fff;">32.5</div>
<div class="t" style="left:1107.50px;width:120px;text-align:right;top:479.09px;font-size:15.6px;line-height:24px;color:#ffffff;-webkit-text-stroke:0.6px #fff;">0.677</div>
<div class="r" style="left:327.00px;top:503.00px;width:17.00px;height:38.00px;background:#f2f3f6;"></div>
<div class="r" style="left:327.00px;top:541.00px;width:1328.00px;height:1.00px;background:#e2e4e9;"></div>
<svg class="r" style="left:331.6px;top:515.40px" width="10" height="14" viewBox="0 0 10 14"><circle cx="2.3" cy="2.0" r="1.25" fill="#a2a5aa"/><circle cx="2.3" cy="6.1" r="1.25" fill="#a2a5aa"/><circle cx="2.3" cy="10.2" r="1.25" fill="#a2a5aa"/><circle cx="6.4" cy="2.0" r="1.25" fill="#a2a5aa"/><circle cx="6.4" cy="6.1" r="1.25" fill="#a2a5aa"/><circle cx="6.4" cy="10.2" r="1.25" fill="#a2a5aa"/></svg>
<div class="t" style="left:352.70px;top:510.15px;font-size:16.6px;line-height:24px;color:#6a6a6a;">Enterprise Storage Solution</div>
<div class="t" style="left:729.60px;width:100px;text-align:right;top:510.15px;font-size:16.6px;line-height:24px;color:#6a6a6a;"><svg class="one" viewBox="0 0 5.8 11.8"><path d="M4.05 0.3V11.8M4.5 0.7L1.0 4.0" stroke="currentColor" stroke-width="1.9" fill="none"/></svg>.5</div>
<div class="t" style="left:947.50px;width:100px;text-align:right;top:510.15px;font-size:16.6px;line-height:24px;color:#6a6a6a;">30</div>
<div class="t" style="left:1126.70px;width:100px;text-align:right;top:510.15px;font-size:16.6px;line-height:24px;color:#6a6a6a;">0.6<svg class="one" viewBox="0 0 5.8 11.8"><path d="M4.05 0.3V11.8M4.5 0.7L1.0 4.0" stroke="currentColor" stroke-width="1.9" fill="none"/></svg>4</div>
<svg class="r" style="left:1252px;top:511.10px" width="390" height="24" viewBox="0 0 390 24"><rect x="0.10" y="0" width="386.20" height="24" fill="#dcdde2"/><rect x="0.10" y="0" width="81.80" height="24" fill="#1f78b4"/><rect x="81.90" y="0" width="31.50" height="24" fill="#33a02c"/><rect x="113.40" y="0" width="51.40" height="24" fill="#e31a1c"/><rect x="164.80" y="0" width="31.50" height="24" fill="#f2c50c"/><rect x="196.30" y="0" width="46.00" height="24" fill="#6b3d9a"/></svg>
<div class="r" style="left:327.00px;top:542.00px;width:17.00px;height:38.00px;background:#f2f3f6;"></div>
<div class="r" style="left:327.00px;top:580.00px;width:1328.00px;height:1.00px;background:#e2e4e9;"></div>
<svg class="r" style="left:331.6px;top:554.15px" width="10" height="14" viewBox="0 0 10 14"><circle cx="2.3" cy="2.0" r="1.25" fill="#a2a5aa"/><circle cx="2.3" cy="6.1" r="1.25" fill="#a2a5aa"/><circle cx="2.3" cy="10.2" r="1.25" fill="#a2a5aa"/><circle cx="6.4" cy="2.0" r="1.25" fill="#a2a5aa"/><circle cx="6.4" cy="6.1" r="1.25" fill="#a2a5aa"/><circle cx="6.4" cy="10.2" r="1.25" fill="#a2a5aa"/></svg>
<div class="t" style="left:352.70px;top:548.90px;font-size:16.6px;line-height:24px;color:#6a6a6a;">Windows Server Life Cycle replacement</div>
<div class="t" style="left:729.60px;width:100px;text-align:right;top:548.90px;font-size:16.6px;line-height:24px;color:#6a6a6a;">2</div>
<div class="t" style="left:947.50px;width:100px;text-align:right;top:548.90px;font-size:16.6px;line-height:24px;color:#6a6a6a;">68</div>
<div class="t" style="left:1126.70px;width:100px;text-align:right;top:548.90px;font-size:16.6px;line-height:24px;color:#6a6a6a;">0.6<svg class="one" viewBox="0 0 5.8 11.8"><path d="M4.05 0.3V11.8M4.5 0.7L1.0 4.0" stroke="currentColor" stroke-width="1.9" fill="none"/></svg>2</div>
<svg class="r" style="left:1252px;top:549.85px" width="390" height="24" viewBox="0 0 390 24"><rect x="0.10" y="0" width="386.20" height="24" fill="#dcdde2"/><rect x="0.10" y="0" width="75.10" height="24" fill="#1f78b4"/><rect x="75.20" y="0" width="78.90" height="24" fill="#33a02c"/><rect x="154.10" y="0" width="12.70" height="24" fill="#e31a1c"/><rect x="166.80" y="0" width="41.30" height="24" fill="#f2c50c"/><rect x="208.10" y="0" width="33.10" height="24" fill="#6b3d9a"/></svg>
<div class="r" style="left:327.00px;top:580.00px;width:17.00px;height:39.00px;background:#f2f3f6;"></div>
<div class="r" style="left:327.00px;top:619.00px;width:1328.00px;height:1.00px;background:#e2e4e9;"></div>
<svg class="r" style="left:331.6px;top:592.90px" width="10" height="14" viewBox="0 0 10 14"><circle cx="2.3" cy="2.0" r="1.25" fill="#a2a5aa"/><circle cx="2.3" cy="6.1" r="1.25" fill="#a2a5aa"/><circle cx="2.3" cy="10.2" r="1.25" fill="#a2a5aa"/><circle cx="6.4" cy="2.0" r="1.25" fill="#a2a5aa"/><circle cx="6.4" cy="6.1" r="1.25" fill="#a2a5aa"/><circle cx="6.4" cy="10.2" r="1.25" fill="#a2a5aa"/></svg>
<div class="t" style="left:352.70px;top:587.65px;font-size:16.6px;line-height:24px;color:#6a6a6a;">EXM Support</div>
<div class="t" style="left:729.60px;width:100px;text-align:right;top:587.65px;font-size:16.6px;line-height:24px;color:#6a6a6a;">2</div>
<div class="t" style="left:947.50px;width:100px;text-align:right;top:587.65px;font-size:16.6px;line-height:24px;color:#6a6a6a;">20</div>
<div class="t" style="left:1126.70px;width:100px;text-align:right;top:587.65px;font-size:16.6px;line-height:24px;color:#6a6a6a;">0.595</div>
<svg class="r" style="left:1252px;top:588.60px" width="390" height="24" viewBox="0 0 390 24"><rect x="0.10" y="0" width="386.20" height="24" fill="#dcdde2"/><rect x="0.10" y="0" width="45.80" height="24" fill="#1f78b4"/><rect x="45.90" y="0" width="62.70" height="24" fill="#33a02c"/><rect x="108.60" y="0" width="47.10" height="24" fill="#e31a1c"/><rect x="155.70" y="0" width="45.10" height="24" fill="#f2c50c"/><rect x="200.80" y="0" width="34.00" height="24" fill="#6b3d9a"/></svg>
<div class="r" style="left:327.00px;top:619.00px;width:17.00px;height:38.00px;background:#f2f3f6;"></div>
<div class="r" style="left:327.00px;top:657.00px;width:1328.00px;height:1.00px;background:#e2e4e9;"></div>
<svg class="r" style="left:331.6px;top:631.65px" width="10" height="14" viewBox="0 0 10 14"><circle cx="2.3" cy="2.0" r="1.25" fill="#a2a5aa"/><circle cx="2.3" cy="6.1" r="1.25" fill="#a2a5aa"/><circle cx="2.3" cy="10.2" r="1.25" fill="#a2a5aa"/><circle cx="6.4" cy="2.0" r="1.25" fill="#a2a5aa"/><circle cx="6.4" cy="6.1" r="1.25" fill="#a2a5aa"/><circle cx="6.4" cy="10.2" r="1.25" fill="#a2a5aa"/></svg>
<div class="t" style="left:352.70px;top:626.40px;font-size:16.6px;line-height:24px;color:#6a6a6a;">Corporate Servers UNIX Update</div>
<div class="t" style="left:729.60px;width:100px;text-align:right;top:626.40px;font-size:16.6px;line-height:24px;color:#6a6a6a;"><svg class="one" viewBox="0 0 5.8 11.8"><path d="M4.05 0.3V11.8M4.5 0.7L1.0 4.0" stroke="currentColor" stroke-width="1.9" fill="none"/></svg>.4</div>
<div class="t" style="left:947.50px;width:100px;text-align:right;top:626.40px;font-size:16.6px;line-height:24px;color:#6a6a6a;">30</div>
<div class="t" style="left:1126.70px;width:100px;text-align:right;top:626.40px;font-size:16.6px;line-height:24px;color:#6a6a6a;">0.575</div>
<svg class="r" style="left:1252px;top:627.35px" width="390" height="24" viewBox="0 0 390 24"><rect x="0.10" y="0" width="386.20" height="24" fill="#dcdde2"/><rect x="0.10" y="0" width="65.80" height="24" fill="#1f78b4"/><rect x="65.90" y="0" width="70.40" height="24" fill="#33a02c"/><rect x="136.30" y="0" width="11.80" height="24" fill="#e31a1c"/><rect x="148.10" y="0" width="32.00" height="24" fill="#f2c50c"/><rect x="180.10" y="0" width="46.20" height="24" fill="#6b3d9a"/></svg>
<div class="r" style="left:327.00px;top:657.00px;width:17.00px;height:39.00px;background:#f2f3f6;"></div>
<div class="r" style="left:327.00px;top:696.00px;width:1328.00px;height:1.00px;background:#e2e4e9;"></div>
<svg class="r" style="left:331.6px;top:670.40px" width="10" height="14" viewBox="0 0 10 14"><circle cx="2.3" cy="2.0" r="1.25" fill="#a2a5aa"/><circle cx="2.3" cy="6.1" r="1.25" fill="#a2a5aa"/><circle cx="2.3" cy="10.2" r="1.25" fill="#a2a5aa"/><circle cx="6.4" cy="2.0" r="1.25" fill="#a2a5aa"/><circle cx="6.4" cy="6.1" r="1.25" fill="#a2a5aa"/><circle cx="6.4" cy="10.2" r="1.25" fill="#a2a5aa"/></svg>
<div class="t" style="left:352.70px;top:665.15px;font-size:16.6px;line-height:24px;color:#6a6a6a;">Configuration Management System</div>
<div class="t" style="left:729.60px;width:100px;text-align:right;top:665.15px;font-size:16.6px;line-height:24px;color:#6a6a6a;">2.5</div>
<div class="t" style="left:947.50px;width:100px;text-align:right;top:665.15px;font-size:16.6px;line-height:24px;color:#6a6a6a;"><svg class="one" viewBox="0 0 5.8 11.8"><path d="M4.05 0.3V11.8M4.5 0.7L1.0 4.0" stroke="currentColor" stroke-width="1.9" fill="none"/></svg>5</div>
<div class="t" style="left:1126.70px;width:100px;text-align:right;top:665.15px;font-size:16.6px;line-height:24px;color:#6a6a6a;">0.566</div>
<svg class="r" style="left:1252px;top:666.10px" width="390" height="24" viewBox="0 0 390 24"><rect x="0.10" y="0" width="386.20" height="24" fill="#dcdde2"/><rect x="0.10" y="0" width="74.20" height="24" fill="#1f78b4"/><rect x="74.30" y="0" width="76.00" height="24" fill="#33a02c"/><rect x="150.30" y="0" width="32.00" height="24" fill="#e31a1c"/><rect x="182.30" y="0" width="23.40" height="24" fill="#f2c50c"/><rect x="205.70" y="0" width="17.30" height="24" fill="#6b3d9a"/></svg>
<div class="r" style="left:327.00px;top:697.00px;width:17.00px;height:38.00px;background:#f2f3f6;"></div>
<div class="r" style="left:327.00px;top:735.00px;width:1328.00px;height:1.00px;background:#e2e4e9;"></div>
<svg class="r" style="left:331.6px;top:709.15px" width="10" height="14" viewBox="0 0 10 14"><circle cx="2.3" cy="2.0" r="1.25" fill="#a2a5aa"/><circle cx="2.3" cy="6.1" r="1.25" fill="#a2a5aa"/><circle cx="2.3" cy="10.2" r="1.25" fill="#a2a5aa"/><circle cx="6.4" cy="2.0" r="1.25" fill="#a2a5aa"/><circle cx="6.4" cy="6.1" r="1.25" fill="#a2a5aa"/><circle cx="6.4" cy="10.2" r="1.25" fill="#a2a5aa"/></svg>
<div class="t" style="left:352.70px;top:703.90px;font-size:16.6px;line-height:24px;color:#6a6a6a;">Enterprise SAN Technology Upgrade</div>
<div class="t" style="left:729.60px;width:100px;text-align:right;top:703.90px;font-size:16.6px;line-height:24px;color:#6a6a6a;">2.2</div>
<div class="t" style="left:947.50px;width:100px;text-align:right;top:703.90px;font-size:16.6px;line-height:24px;color:#6a6a6a;">8</div>
<div class="t" style="left:1126.70px;width:100px;text-align:right;top:703.90px;font-size:16.6px;line-height:24px;color:#6a6a6a;">0.562</div>
<svg class="r" style="left:1252px;top:704.85px" width="390" height="24" viewBox="0 0 390 24"><rect x="0.10" y="0" width="386.20" height="24" fill="#dcdde2"/><rect x="0.10" y="0" width="76.50" height="24" fill="#1f78b4"/><rect x="76.60" y="0" width="78.60" height="24" fill="#33a02c"/><rect x="155.20" y="0" width="12.90" height="24" fill="#e31a1c"/><rect x="168.10" y="0" width="41.60" height="24" fill="#f2c50c"/><rect x="209.70" y="0" width="11.70" height="24" fill="#6b3d9a"/></svg>
<div class="r" style="left:327.00px;top:735.00px;width:17.00px;height:39.00px;background:#f2f3f6;"></div>
<div class="r" style="left:327.00px;top:774.00px;width:1328.00px;height:1.00px;background:#e2e4e9;"></div>
<svg class="r" style="left:331.6px;top:747.90px" width="10" height="14" viewBox="0 0 10 14"><circle cx="2.3" cy="2.0" r="1.25" fill="#a2a5aa"/><circle cx="2.3" cy="6.1" r="1.25" fill="#a2a5aa"/><circle cx="2.3" cy="10.2" r="1.25" fill="#a2a5aa"/><circle cx="6.4" cy="2.0" r="1.25" fill="#a2a5aa"/><circle cx="6.4" cy="6.1" r="1.25" fill="#a2a5aa"/><circle cx="6.4" cy="10.2" r="1.25" fill="#a2a5aa"/></svg>
<div class="t" style="left:352.70px;top:742.65px;font-size:16.6px;line-height:24px;color:#6a6a6a;">ID Management System</div>
<div class="t" style="left:729.60px;width:100px;text-align:right;top:742.65px;font-size:16.6px;line-height:24px;color:#6a6a6a;">0.7</div>
<div class="t" style="left:947.50px;width:100px;text-align:right;top:742.65px;font-size:16.6px;line-height:24px;color:#6a6a6a;"><svg class="one" viewBox="0 0 5.8 11.8"><path d="M4.05 0.3V11.8M4.5 0.7L1.0 4.0" stroke="currentColor" stroke-width="1.9" fill="none"/></svg><svg class="one" viewBox="0 0 5.8 11.8"><path d="M4.05 0.3V11.8M4.5 0.7L1.0 4.0" stroke="currentColor" stroke-width="1.9" fill="none"/></svg></div>
<div class="t" style="left:1126.70px;width:100px;text-align:right;top:742.65px;font-size:16.6px;line-height:24px;color:#6a6a6a;">0.558</div>
<svg class="r" style="left:1252px;top:743.60px" width="390" height="24" viewBox="0 0 390 24"><rect x="0.10" y="0" width="386.20" height="24" fill="#dcdde2"/><rect x="0.10" y="0" width="75.10" height="24" fill="#1f78b4"/><rect x="75.20" y="0" width="63.10" height="24" fill="#33a02c"/><rect x="138.30" y="0" width="36.90" height="24" fill="#e31a1c"/><rect x="175.20" y="0" width="17.80" height="24" fill="#f2c50c"/><rect x="193.00" y="0" width="26.90" height="24" fill="#6b3d9a"/></svg>
<div class="r" style="left:327.00px;top:774.00px;width:17.00px;height:38.00px;background:#f2f3f6;"></div>
<div class="r" style="left:327.00px;top:812.00px;width:1328.00px;height:1.00px;background:#e2e4e9;"></div>
<svg class="r" style="left:331.6px;top:786.65px" width="10" height="14" viewBox="0 0 10 14"><circle cx="2.3" cy="2.0" r="1.25" fill="#a2a5aa"/><circle cx="2.3" cy="6.1" r="1.25" fill="#a2a5aa"/><circle cx="2.3" cy="10.2" r="1.25" fill="#a2a5aa"/><circle cx="6.4" cy="2.0" r="1.25" fill="#a2a5aa"/><circle cx="6.4" cy="6.1" r="1.25" fill="#a2a5aa"/><circle cx="6.4" cy="10.2" r="1.25" fill="#a2a5aa"/></svg>
<div class="t" style="left:352.70px;top:781.40px;font-size:16.6px;line-height:24px;color:#6a6a6a;">Centralized Audit Trail</div>
<div class="t" style="left:729.60px;width:100px;text-align:right;top:781.40px;font-size:16.6px;line-height:24px;color:#6a6a6a;"><svg class="one" viewBox="0 0 5.8 11.8"><path d="M4.05 0.3V11.8M4.5 0.7L1.0 4.0" stroke="currentColor" stroke-width="1.9" fill="none"/></svg>.6</div>
<div class="t" style="left:947.50px;width:100px;text-align:right;top:781.40px;font-size:16.6px;line-height:24px;color:#6a6a6a;"><svg class="one" viewBox="0 0 5.8 11.8"><path d="M4.05 0.3V11.8M4.5 0.7L1.0 4.0" stroke="currentColor" stroke-width="1.9" fill="none"/></svg>0</div>
<div class="t" style="left:1126.70px;width:100px;text-align:right;top:781.40px;font-size:16.6px;line-height:24px;color:#6a6a6a;">0.555</div>
<svg class="r" style="left:1252px;top:782.35px" width="390" height="24" viewBox="0 0 390 24"><rect x="0.10" y="0" width="386.20" height="24" fill="#dcdde2"/><rect x="0.10" y="0" width="87.60" height="24" fill="#1f78b4"/><rect x="87.70" y="0" width="55.30" height="24" fill="#33a02c"/><rect x="143.00" y="0" width="32.20" height="24" fill="#e31a1c"/><rect x="175.20" y="0" width="25.60" height="24" fill="#f2c50c"/><rect x="200.80" y="0" width="18.00" height="24" fill="#6b3d9a"/></svg>
<div class="r" style="left:327.00px;top:812.00px;width:17.00px;height:39.00px;background:#f2f3f6;"></div>
<div class="r" style="left:327.00px;top:851.00px;width:1328.00px;height:1.00px;background:#e2e4e9;"></div>
<svg class="r" style="left:331.6px;top:825.40px" width="10" height="14" viewBox="0 0 10 14"><circle cx="2.3" cy="2.0" r="1.25" fill="#a2a5aa"/><circle cx="2.3" cy="6.1" r="1.25" fill="#a2a5aa"/><circle cx="2.3" cy="10.2" r="1.25" fill="#a2a5aa"/><circle cx="6.4" cy="2.0" r="1.25" fill="#a2a5aa"/><circle cx="6.4" cy="6.1" r="1.25" fill="#a2a5aa"/><circle cx="6.4" cy="10.2" r="1.25" fill="#a2a5aa"/></svg>
<div class="t" style="left:352.70px;top:820.15px;font-size:16.6px;line-height:24px;color:#6a6a6a;">AFO Platform</div>
<div class="t" style="left:729.60px;width:100px;text-align:right;top:820.15px;font-size:16.6px;line-height:24px;color:#6a6a6a;">3</div>
<div class="t" style="left:947.50px;width:100px;text-align:right;top:820.15px;font-size:16.6px;line-height:24px;color:#6a6a6a;">5</div>
<div class="t" style="left:1126.70px;width:100px;text-align:right;top:820.15px;font-size:16.6px;line-height:24px;color:#6a6a6a;">0.54<svg class="one" viewBox="0 0 5.8 11.8"><path d="M4.05 0.3V11.8M4.5 0.7L1.0 4.0" stroke="currentColor" stroke-width="1.9" fill="none"/></svg></div>
<svg class="r" style="left:1252px;top:821.10px" width="390" height="24" viewBox="0 0 390 24"><rect x="0.10" y="0" width="386.20" height="24" fill="#dcdde2"/><rect x="0.10" y="0" width="80.00" height="24" fill="#1f78b4"/><rect x="80.10" y="0" width="79.10" height="24" fill="#33a02c"/><rect x="159.20" y="0" width="14.20" height="24" fill="#e31a1c"/><rect x="173.40" y="0" width="18.50" height="24" fill="#f2c50c"/><rect x="191.90" y="0" width="21.50" height="24" fill="#6b3d9a"/></svg>
<div class="r" style="left:327.00px;top:852.00px;width:17.00px;height:38.00px;background:#f2f3f6;"></div>
<div class="r" style="left:327.00px;top:890.00px;width:1328.00px;height:1.00px;background:#e2e4e9;"></div>
<svg class="r" style="left:331.6px;top:864.15px" width="10" height="14" viewBox="0 0 10 14"><circle cx="2.3" cy="2.0" r="1.25" fill="#a2a5aa"/><circle cx="2.3" cy="6.1" r="1.25" fill="#a2a5aa"/><circle cx="2.3" cy="10.2" r="1.25" fill="#a2a5aa"/><circle cx="6.4" cy="2.0" r="1.25" fill="#a2a5aa"/><circle cx="6.4" cy="6.1" r="1.25" fill="#a2a5aa"/><circle cx="6.4" cy="10.2" r="1.25" fill="#a2a5aa"/></svg>
<div class="t" style="left:352.70px;top:858.90px;font-size:16.6px;line-height:24px;color:#6a6a6a;">Network Acceleration</div>
<div class="t" style="left:729.60px;width:100px;text-align:right;top:858.90px;font-size:16.6px;line-height:24px;color:#6a6a6a;"><svg class="one" viewBox="0 0 5.8 11.8"><path d="M4.05 0.3V11.8M4.5 0.7L1.0 4.0" stroke="currentColor" stroke-width="1.9" fill="none"/></svg></div>
<div class="t" style="left:947.50px;width:100px;text-align:right;top:858.90px;font-size:16.6px;line-height:24px;color:#6a6a6a;"><svg class="one" viewBox="0 0 5.8 11.8"><path d="M4.05 0.3V11.8M4.5 0.7L1.0 4.0" stroke="currentColor" stroke-width="1.9" fill="none"/></svg>5</div>
<div class="t" style="left:1126.70px;width:100px;text-align:right;top:858.90px;font-size:16.6px;line-height:24px;color:#6a6a6a;">0.534</div>
<svg class="r" style="left:1252px;top:859.85px" width="390" height="24" viewBox="0 0 390 24"><rect x="0.10" y="0" width="386.20" height="24" fill="#dcdde2"/><rect x="0.10" y="0" width="80.00" height="24" fill="#1f78b4"/><rect x="80.10" y="0" width="31.80" height="24" fill="#33a02c"/><rect x="111.90" y="0" width="37.10" height="24" fill="#e31a1c"/><rect x="149.00" y="0" width="18.70" height="24" fill="#f2c50c"/><rect x="167.70" y="0" width="42.60" height="24" fill="#6b3d9a"/></svg>
<div class="r" style="left:327.00px;top:890.00px;width:17.00px;height:39.00px;background:#f2f3f6;"></div>
<div class="r" style="left:327.00px;top:929.00px;width:1328.00px;height:1.00px;background:#e2e4e9;"></div>
<svg class="r" style="left:331.6px;top:902.90px" width="10" height="14" viewBox="0 0 10 14"><circle cx="2.3" cy="2.0" r="1.25" fill="#a2a5aa"/><circle cx="2.3" cy="6.1" r="1.25" fill="#a2a5aa"/><circle cx="2.3" cy="10.2" r="1.25" fill="#a2a5aa"/><circle cx="6.4" cy="2.0" r="1.25" fill="#a2a5aa"/><circle cx="6.4" cy="6.1" r="1.25" fill="#a2a5aa"/><circle cx="6.4" cy="10.2" r="1.25" fill="#a2a5aa"/></svg>
<div class="t" style="left:352.70px;top:897.65px;font-size:16.6px;line-height:24px;color:#6a6a6a;">IT Service Transformation</div>
<div class="t" style="left:729.60px;width:100px;text-align:right;top:897.65px;font-size:16.6px;line-height:24px;color:#6a6a6a;">3</div>
<div class="t" style="left:947.50px;width:100px;text-align:right;top:897.65px;font-size:16.6px;line-height:24px;color:#6a6a6a;"><svg class="one" viewBox="0 0 5.8 11.8"><path d="M4.05 0.3V11.8M4.5 0.7L1.0 4.0" stroke="currentColor" stroke-width="1.9" fill="none"/></svg>0</div>
<div class="t" style="left:1126.70px;width:100px;text-align:right;top:897.65px;font-size:16.6px;line-height:24px;color:#6a6a6a;">0.53<svg class="one" viewBox="0 0 5.8 11.8"><path d="M4.05 0.3V11.8M4.5 0.7L1.0 4.0" stroke="currentColor" stroke-width="1.9" fill="none"/></svg></div>
<svg class="r" style="left:1252px;top:898.60px" width="390" height="24" viewBox="0 0 390 24"><rect x="0.10" y="0" width="386.20" height="24" fill="#dcdde2"/><rect x="0.10" y="0" width="80.00" height="24" fill="#1f78b4"/><rect x="80.10" y="0" width="63.60" height="24" fill="#33a02c"/><rect x="143.70" y="0" width="35.50" height="24" fill="#e31a1c"/><rect x="179.20" y="0" width="18.70" height="24" fill="#f2c50c"/><rect x="197.90" y="0" width="11.10" height="24" fill="#6b3d9a"/></svg>
<div class="r" style="left:327.00px;top:929.00px;width:17.00px;height:38.00px;background:#f2f3f6;"></div>
<div class="r" style="left:327.00px;top:967.00px;width:1328.00px;height:1.00px;background:#e2e4e9;"></div>
<svg class="r" style="left:331.6px;top:941.65px" width="10" height="14" viewBox="0 0 10 14"><circle cx="2.3" cy="2.0" r="1.25" fill="#a2a5aa"/><circle cx="2.3" cy="6.1" r="1.25" fill="#a2a5aa"/><circle cx="2.3" cy="10.2" r="1.25" fill="#a2a5aa"/><circle cx="6.4" cy="2.0" r="1.25" fill="#a2a5aa"/><circle cx="6.4" cy="6.1" r="1.25" fill="#a2a5aa"/><circle cx="6.4" cy="10.2" r="1.25" fill="#a2a5aa"/></svg>
<div class="t" style="left:352.70px;top:936.40px;font-size:16.6px;line-height:24px;color:#6a6a6a;">EFM Support System</div>
<div class="t" style="left:729.60px;width:100px;text-align:right;top:936.40px;font-size:16.6px;line-height:24px;color:#6a6a6a;">2</div>
<div class="t" style="left:947.50px;width:100px;text-align:right;top:936.40px;font-size:16.6px;line-height:24px;color:#6a6a6a;">25</div>
<div class="t" style="left:1126.70px;width:100px;text-align:right;top:936.40px;font-size:16.6px;line-height:24px;color:#6a6a6a;">0.527</div>
<svg class="r" style="left:1252px;top:937.35px" width="390" height="24" viewBox="0 0 390 24"><rect x="0.10" y="0" width="386.20" height="24" fill="#dcdde2"/><rect x="0.10" y="0" width="64.50" height="24" fill="#1f78b4"/><rect x="64.60" y="0" width="31.70" height="24" fill="#33a02c"/><rect x="96.30" y="0" width="42.90" height="24" fill="#e31a1c"/><rect x="139.20" y="0" width="31.10" height="24" fill="#f2c50c"/><rect x="170.30" y="0" width="37.10" height="24" fill="#6b3d9a"/></svg>
<div class="r" style="left:327.00px;top:967.00px;width:17.00px;height:39.00px;background:#f2f3f6;"></div>
<div class="r" style="left:327.00px;top:1006.00px;width:1328.00px;height:1.00px;background:#e2e4e9;"></div>
<svg class="r" style="left:331.6px;top:980.40px" width="10" height="14" viewBox="0 0 10 14"><circle cx="2.3" cy="2.0" r="1.25" fill="#a2a5aa"/><circle cx="2.3" cy="6.1" r="1.25" fill="#a2a5aa"/><circle cx="2.3" cy="10.2" r="1.25" fill="#a2a5aa"/><circle cx="6.4" cy="2.0" r="1.25" fill="#a2a5aa"/><circle cx="6.4" cy="6.1" r="1.25" fill="#a2a5aa"/><circle cx="6.4" cy="10.2" r="1.25" fill="#a2a5aa"/></svg>
<div class="t" style="left:352.70px;top:975.15px;font-size:16.6px;line-height:24px;color:#6a6a6a;">XXX Support</div>
<div class="t" style="left:729.60px;width:100px;text-align:right;top:975.15px;font-size:16.6px;line-height:24px;color:#6a6a6a;"><svg class="one" viewBox="0 0 5.8 11.8"><path d="M4.05 0.3V11.8M4.5 0.7L1.0 4.0" stroke="currentColor" stroke-width="1.9" fill="none"/></svg>.3</div>
<div class="t" style="left:947.50px;width:100px;text-align:right;top:975.15px;font-size:16.6px;line-height:24px;color:#6a6a6a;">25</div>
<div class="t" style="left:1126.70px;width:100px;text-align:right;top:975.15px;font-size:16.6px;line-height:24px;color:#6a6a6a;">0.48<svg class="one" viewBox="0 0 5.8 11.8"><path d="M4.05 0.3V11.8M4.5 0.7L1.0 4.0" stroke="currentColor" stroke-width="1.9" fill="none"/></svg></div>
<svg class="r" style="left:1252px;top:976.10px" width="390" height="24" viewBox="0 0 390 24"><rect x="0.10" y="0" width="386.20" height="24" fill="#dcdde2"/><rect x="0.10" y="0" width="80.00" height="24" fill="#1f78b4"/><rect x="80.10" y="0" width="31.80" height="24" fill="#33a02c"/><rect x="111.90" y="0" width="24.40" height="24" fill="#e31a1c"/><rect x="136.30" y="0" width="18.90" height="24" fill="#f2c50c"/><rect x="155.20" y="0" width="34.50" height="24" fill="#6b3d9a"/></svg>
<div class="r" style="left:327.00px;top:1007.00px;width:17.00px;height:38.00px;background:#f2f3f6;"></div>
<div class="r" style="left:327.00px;top:1045.00px;width:1328.00px;height:1.00px;background:#e2e4e9;"></div>
<svg class="r" style="left:331.6px;top:1019.15px" width="10" height="14" viewBox="0 0 10 14"><circle cx="2.3" cy="2.0" r="1.25" fill="#a2a5aa"/><circle cx="2.3" cy="6.1" r="1.25" fill="#a2a5aa"/><circle cx="2.3" cy="10.2" r="1.25" fill="#a2a5aa"/><circle cx="6.4" cy="2.0" r="1.25" fill="#a2a5aa"/><circle cx="6.4" cy="6.1" r="1.25" fill="#a2a5aa"/><circle cx="6.4" cy="10.2" r="1.25" fill="#a2a5aa"/></svg>
<div class="r" style="left:327.00px;top:90.60px;width:1328.00px;height:1.20px;background:#d5d8dd;"></div>
</body></html>
